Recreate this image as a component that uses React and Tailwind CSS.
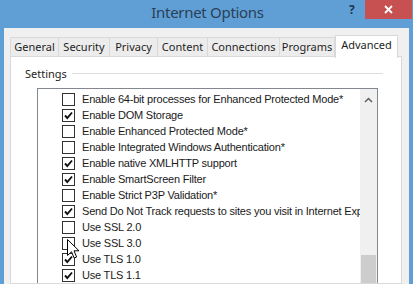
import { useState } from 'react'

const tabs = [
  { label: 'General', w: 'w-[49px]' },
  { label: 'Security', w: 'w-[51px]' },
  { label: 'Privacy', w: 'w-[48px]' },
  { label: 'Content', w: 'w-[50px]' },
  { label: 'Connections', w: 'w-[72px]' },
  { label: 'Programs', w: 'w-[55px]' },
]

const items = [
  { text: 'Enable 64-bit processes for Enhanced Protected Mode*', on: false },
  { text: 'Enable DOM Storage', on: true },
  { text: 'Enable Enhanced Protected Mode*', on: false },
  { text: 'Enable Integrated Windows Authentication*', on: false },
  { text: 'Enable native XMLHTTP support', on: true },
  { text: 'Enable SmartScreen Filter', on: true },
  { text: 'Enable Strict P3P Validation*', on: false },
  { text: 'Send Do Not Track requests to sites you visit in Internet Explorer*', on: true },
  { text: 'Use SSL 2.0', on: false },
  { text: 'Use SSL 3.0', on: false },
  { text: 'Use TLS 1.0', on: true },
  { text: 'Use TLS 1.1', on: true },
  { text: 'Use TLS 1.2', on: true },
]

function CheckBox({ on }) {
  return (
    <span className="w-[13px] h-[13px] shrink-0 border border-[#333333] bg-white flex items-center justify-center">
      {on && (
        <svg width="11" height="11" viewBox="0 0 11 11">
          <path d="M2 5.5 L4.3 8 L9 2.5" fill="none" stroke="#111" strokeWidth="1.9" />
        </svg>
      )}
    </span>
  )
}

function Cursor() {
  return (
    <svg className="absolute left-[67px] top-[239px] z-20" width="13" height="21" viewBox="0 0 13 21">
      <path
        d="M0.5 0.5 L0.5 16.5 L4.5 12.8 L7.2 19 L9.6 18 L7 11.8 L12 11.8 Z"
        fill="#fff"
        stroke="#000"
        strokeWidth="1"
      />
    </svg>
  )
}

export default function App() {
  const [list] = useState(items)

  return (
    <div className="relative w-[413px] h-[284px] overflow-hidden bg-[#5f9fd6] flex flex-col" style={{ fontFamily: '"Noto Sans", "Liberation Sans", sans-serif' }}>
      {/* Title bar */}
      <div className="relative h-[28px] shrink-0 flex items-center justify-center">
        <span className="text-[15px] tracking-[-0.3px] text-[#2b3f55] leading-none -mt-[3px] ml-[2px]">Internet Options</span>
        <span className="absolute left-[349px] top-[1px] text-[12px] font-bold text-[#23364f]">?</span>
        <div className="absolute left-[365px] top-0 w-[47px] h-[19px] bg-[#c75050] flex items-center justify-center">
          <svg width="9" height="9" viewBox="0 0 9 9">
            <path d="M1 1 L8 8 M8 1 L1 8" stroke="#fff" strokeWidth="1.8" />
          </svg>
        </div>
      </div>

      {/* Dialog body */}
      <div className="flex-1 min-h-0 ml-[4px] mr-[4px] bg-[#f0f0f0] pt-[7px] flex flex-col">
        {/* Tabs */}
        <div className="flex items-end ml-[6px] h-[22px] shrink-0 relative z-10">
          {tabs.map((t, i) => (
            <div
              key={t.label}
              className={`${t.w} h-[20px] bg-[#ececec] border-t border-b border-[#d9d9d9] ${i === 0 ? 'border-l' : ''} border-r flex items-center justify-center text-[11px] text-[#1e1e1e]`}
            >
              {t.label}
            </div>
          ))}
          <div className="w-[63px] h-[23px] -mb-px bg-white border border-b-0 border-[#d9d9d9] flex items-start justify-center pt-[1px] text-[11px] text-[#1e1e1e]">
            Advanced
          </div>
        </div>

        {/* Tab panel */}
        <div className="flex-1 min-h-0 ml-[6px] mr-[7px] -mt-px bg-white border border-[#d9d9d9] flex flex-col">
          <div className="flex items-center h-[31px] shrink-0 pl-[14px] pr-[18px] pt-[2px]">
            <span className="text-[11px] text-[#1e1e1e] leading-none">Settings</span>
            <div className="flex-1 h-px bg-[#dcdcdc] ml-[5px]" />
          </div>

          {/* List box */}
          <div className="flex-1 min-h-0 ml-[26px] mr-[23px] border border-[#828790] border-b-0 flex overflow-hidden">
            <div className="flex-1 min-w-0 flex flex-col pt-[2px] overflow-hidden" style={{ fontFamily: '"Liberation Sans", Arial, sans-serif' }}>
              {list.map((it) => (
                <div key={it.text} className="h-[16px] shrink-0 flex items-center pl-[24px] whitespace-nowrap">
                  <CheckBox on={it.on} />
                  <span className="ml-[7px] text-[11px] tracking-[-0.2px] text-[#1a1a1a] leading-none">{it.text}</span>
                </div>
              ))}
            </div>
            {/* Scrollbar */}
            <div className="w-[17px] shrink-0 bg-[#f0f0f0] flex flex-col">
              <div className="h-[17px] flex items-center justify-center mt-[2px]">
                <svg width="9" height="6" viewBox="0 0 9 6">
                  <path d="M1 5 L4.5 1.5 L8 5" fill="none" stroke="#606060" strokeWidth="1.5" />
                </svg>
              </div>
              <div className="flex-1" />
              <div className="h-[28px] mx-px bg-[#cdcdcd]" />
            </div>
          </div>
        </div>
      </div>

      <Cursor />
    </div>
  )
}
